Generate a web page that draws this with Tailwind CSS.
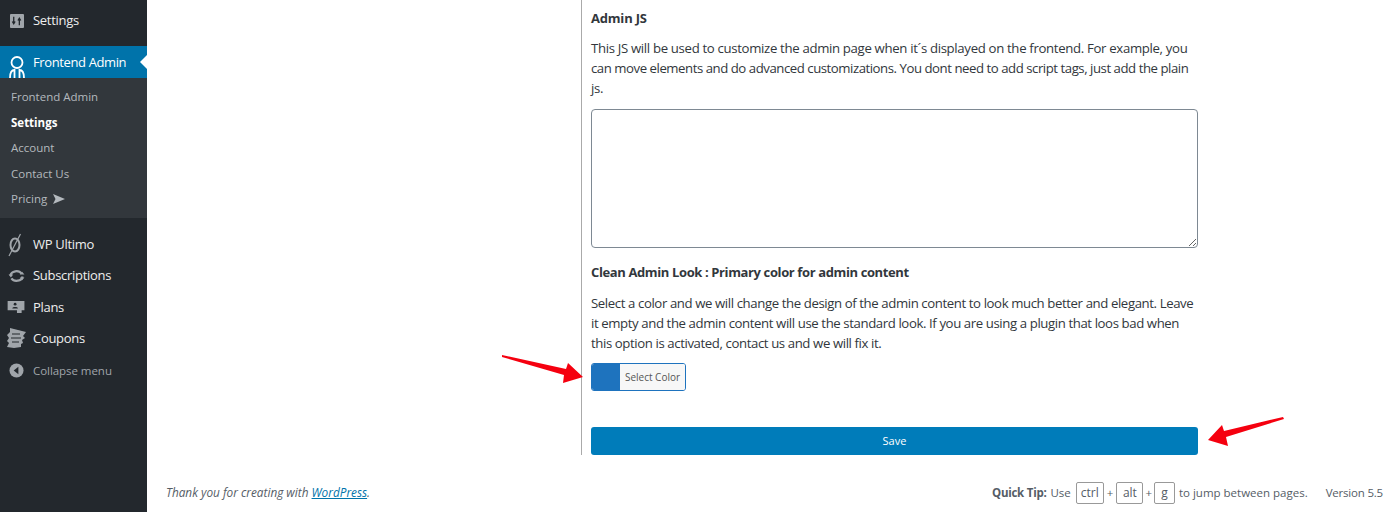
<!DOCTYPE html>
<html lang="en">
<head>
  <meta charset="UTF-8" />
  <title>Frontend Admin Settings</title>
  <script src="https://cdn.jsdelivr.net/npm/@tailwindcss/browser@4"></script>
</head>
<body class="h-[512px] overflow-hidden bg-white font-['Open_Sans',sans-serif] text-[#32373c]">
  <div class="relative flex h-[512px]">
    <!-- admin sidebar -->
    <aside class="w-[147px] shrink-0 bg-[#23282d] text-[13px] tracking-[-0.3px] text-[#eeeeee]">
      <div class="flex h-[46px] items-start gap-[9px] pl-[10px] pt-[11px]">
        <svg class="mt-[3px] h-[14px] w-[14px]" viewBox="0 0 15 15"><rect width="15" height="15" rx="1" fill="#a0a5aa"/><path d="M4 3v7M2.500 8l1.500 2.500L5.500 8M10 12V5M8.500 7L10 4.500 11.500 7" stroke="#23282d" stroke-width="1.400" fill="none"/></svg>
        <span>Settings</span>
      </div>
      <div class="relative flex h-[32px] items-center overflow-hidden bg-[#0073aa] pl-[33px] pt-[2px] font-medium tracking-[-0.38px] text-white">
        <svg class="absolute left-[7px] top-[9px] h-[23px] w-[20px]" viewBox="0 0 20 23"><circle cx="10" cy="7.500" r="5.500" fill="none" stroke="#fff" stroke-width="1.800"/><path d="M3 23C3 18 4 15 7.500 15V23M17 23C17 18 16 15 12.500 15V23" fill="none" stroke="#fff" stroke-width="1.800"/></svg>
        <span>Frontend Admin</span>
        <span class="absolute right-0 top-[9px] h-0 w-0 border-y-[7px] border-r-[7px] border-y-transparent border-r-white"></span>
      </div>
      <ul class="flex h-[140px] flex-col bg-[#32373c] pl-[11px] pt-[6px] text-[11.500px] tracking-normal text-[#b4b9be]">
        <li class="h-[25.500px] leading-[25px]">Frontend Admin</li>
        <li class="h-[25.500px] font-bold leading-[25px] text-white">Settings</li>
        <li class="h-[25.500px] leading-[25px]">Account</li>
        <li class="h-[25.500px] leading-[25px]">Contact Us</li>
        <li class="flex h-[25.500px] items-center gap-[6px]">Pricing
          <svg class="h-[10px] w-[12px]" viewBox="0 0 12 10"><path d="M0 0l12 5-12 5 2.500-5z" fill="#b4b9be"/></svg>
        </li>
      </ul>
      <div class="relative mt-[12px] flex h-[30px] items-center pl-[33px]">
        <svg class="absolute left-[7px] top-[3px] h-[24px] w-[16px]" viewBox="0 0 16 24"><ellipse cx="8" cy="12" rx="4.500" ry="6.500" fill="none" stroke="#a0a5aa" stroke-width="2"/><path d="M13.500 1L2 23" stroke="#a0a5aa" stroke-width="1.200"/></svg>
        <span>WP Ultimo</span>
      </div>
      <div class="relative flex h-[32px] items-center pl-[33px]">
        <svg class="absolute left-[8px] top-[9px] h-[14px] w-[17px]" viewBox="0 0 17 15"><path d="M2 7a6.500 5.500 0 0 1 12-2M15 8a6.500 5.500 0 0 1-12 2" fill="none" stroke="#a0a5aa" stroke-width="2.400"/><path d="M0 6h5L2.500 9zM12 6h5l-2.500-3zM12 9h5l-2.500 3z" fill="#a0a5aa"/></svg>
        <span>Subscriptions</span>
      </div>
      <div class="relative flex h-[31px] items-center pl-[33px]">
        <svg class="absolute left-[7px] top-[8px] h-[14px] w-[19px]" viewBox="0 0 19 15"><path d="M0 1h18v10h-3v3h-5v-3H0z" fill="#a0a5aa"/><circle cx="8" cy="4.500" r="1.500" fill="#23282d"/><path d="M5 9c0-2 6-2 6 0z" fill="#23282d"/></svg>
        <span>Plans</span>
      </div>
      <div class="relative flex h-[32px] items-center pl-[33px]">
        <svg class="absolute left-[7px] top-[5px] h-[20px] w-[19px]" viewBox="0 0 19 20"><path d="M3 0l12 3 4 1-3 4 2 2-3 2 1 3-2 1 0 3-7 1-7-1 2-4-2-2 2-3-2-3 3-3z" fill="#a0a5aa"/><path d="M5 6h8M4 10h10M5 14h7" stroke="#23282d" stroke-width="1"/></svg>
        <span>Coupons</span>
      </div>
      <div class="flex h-[31px] items-center gap-[9px] pl-[9px] text-[11.500px] tracking-[-0.05px] text-[#a0a5aa]">
        <svg class="h-[15px] w-[15px]" viewBox="0 0 16 16"><circle cx="8" cy="8" r="7.500" fill="#a0a5aa"/><path d="M10 4v8L5 8z" fill="#23282d"/></svg>
        <span>Collapse menu</span>
      </div>
    </aside>

    <!-- page content -->
    <main class="flex min-w-0 flex-1 flex-col">
      <div class="ml-[434px] h-[455px] w-[617px] border-l border-[#aaaaaa] pl-[9px] text-[13.200px] leading-[20px] tracking-[-0.33px]">
        <h2 class="pt-[8px] text-[13px] font-bold leading-[20px] tracking-[-0.2px]">Admin JS</h2>
        <p class="mt-[10px] w-[607px] whitespace-nowrap">This JS will be used to customize the admin page when it´s displayed on the frontend. For example, you<br />
          <span class="tracking-[-0.46px]">can move elements and do advanced customizations. You dont need to add script tags, just add the plain</span><br />
          js.</p>
        <textarea class="mt-[11px] block h-[139px] w-[607px] rounded-[4px] border border-[#7e8993] bg-white"></textarea>
        <h2 class="mt-[14px] text-[13px] font-bold leading-[20px] tracking-[-0.38px]">Clean Admin Look : Primary color for admin content</h2>
        <p class="mt-[11px] w-[607px] whitespace-nowrap tracking-[-0.4px]">Select a color and we will change the design of the admin content to look much better and elegant. Leave<br />
          it empty and the admin content will use the standard look. If you are using a plugin that loos bad when<br />
          this option is activated, contact us and we will fix it.</p>
        <button class="mt-[10px] flex h-[28px] w-[95px] overflow-hidden rounded-[3px] border border-[#1e73be]">
          <span class="h-full w-[28px] bg-[#1e73be]"></span>
          <span class="flex h-full flex-1 items-center justify-center bg-[#f7f7f7] text-[10px] tracking-normal text-[#555555]">Select Color</span>
        </button>
        <button class="mt-[36px] block h-[28px] w-[607px] rounded-[3px] bg-[#007cba] text-center text-[11px] tracking-normal text-white">Save</button>
      </div>
      <footer class="flex items-start justify-between pl-[19px] pr-[17px] pt-[27px] text-[11.500px] leading-[20px] text-[#555d66]">
        <p class="text-[11.800px] italic">Thank you for creating with <a class="text-[#0073aa] underline">WordPress</a>.</p>
        <div class="flex items-center">
          <strong class="font-bold tracking-[-0.25px]">Quick Tip:</strong>
          <span class="ml-[4px]">Use</span>
          <kbd class="ml-[5px] flex h-[22px] w-[28px] items-center justify-center rounded-[2px] border border-[#999999] font-['Open_Sans',sans-serif] text-[12px]">ctrl</kbd>
          <span class="mx-[3px]">+</span>
          <kbd class="flex h-[22px] w-[27px] items-center justify-center rounded-[2px] border border-[#999999] font-['Open_Sans',sans-serif] text-[12px]">alt</kbd>
          <span class="mx-[2px]">+</span>
          <kbd class="flex h-[22px] w-[21px] items-center justify-center rounded-[2px] border border-[#999999] font-['Open_Sans',sans-serif] text-[12px]">g</kbd>
          <span class="ml-[4px]">to jump between pages.</span>
          <span class="ml-[18px] tracking-[-0.2px]">Version 5.5</span>
        </div>
      </footer>
    </main>

    <!-- red annotation arrows -->
    <svg class="absolute left-[500px] top-[350px] h-[36px] w-[86px]" viewBox="0 0 86 36"><path d="M2 5L66 19l2-6 15 14-20 6 1-8L2 7z" fill="#f5000f"/></svg>
    <svg class="absolute left-[1200px] top-[410px] h-[40px] w-[86px]" viewBox="0 0 86 40"><path d="M83 7L24 21l-2-6L8 30l20 6-2-9L84 9z" fill="#f5000f"/></svg>
  </div>
</body>
</html>
